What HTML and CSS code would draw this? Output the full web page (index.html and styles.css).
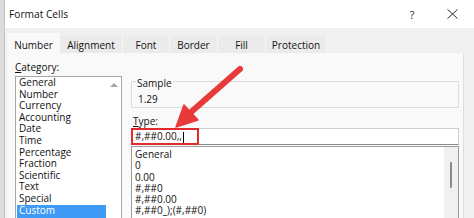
FILE: index.html
```html
<!DOCTYPE html>
<html>
<head>
<meta charset="utf-8">
<link rel="stylesheet" href="styles.css">
</head>
<body>
<div class="window">
  <div class="titlebar">
    <span class="title">Format Cells</span>
    <span class="help">?</span>
    <span class="close">
      <svg width="11" height="10" viewBox="0 0 11 10"><path d="M0.5 0.5 L10.5 9.5 M10.5 0.5 L0.5 9.5" stroke="#2a2a2a" stroke-width="1" fill="none"/></svg>
    </span>
  </div>
  <div class="content">
    <div class="tabs">
      <div class="tab active w-number">Number</div>
      <div class="tab w-align">Alignment</div>
      <div class="tab w-font">Font</div>
      <div class="tab w-border">Border</div>
      <div class="tab w-fill">Fill</div>
      <div class="tab w-prot">Protection</div>
    </div>
    <div class="panel">
      <div class="col-left">
        <div class="label"><u>C</u>ategory:</div>
        <div class="catlist">
          <div class="items">
            <div class="item">General</div>
            <div class="item">Number</div>
            <div class="item">Currency</div>
            <div class="item">Accounting</div>
            <div class="item">Date</div>
            <div class="item">Time</div>
            <div class="item">Percentage</div>
            <div class="item">Fraction</div>
            <div class="item">Scientific</div>
            <div class="item">Text</div>
            <div class="item">Special</div>
            <div class="item sel">Custom</div>
          </div>
          <div class="vscroll"><span class="up"></span></div>
        </div>
      </div>
      <div class="col-right">
        <div class="sample">
          <span class="legend">Sample</span>
          <div class="sample-val">1.29</div>
        </div>
        <div class="label type-label"><u>T</u>ype:</div>
        <div class="typebox">#,##0.00,,<span class="caret"></span><span class="redbox"></span></div>
        <div class="typelist">
          <div class="titems">
            <div class="titem">General</div>
            <div class="titem">0</div>
            <div class="titem">0.00</div>
            <div class="titem">#,##0</div>
            <div class="titem">#,##0.00</div>
            <div class="titem">#,##0_);(#,##0)</div>
          </div>
          <div class="tscroll"><span class="thumb"></span></div>
        </div>
      </div>
    </div>
  </div>
</div>
<svg class="arrow" width="474" height="218" viewBox="0 0 474 218">
  <line x1="240" y1="69" x2="190" y2="113" stroke="#e8393b" stroke-width="6" stroke-linecap="round"/>
  <polygon points="176,127 184,105 198,120" fill="#e8393b" stroke="#e8393b" stroke-width="1.5" stroke-linejoin="round"/>
</svg>
</body>
</html>
```

FILE: styles.css
```css
* { box-sizing: border-box; }
html, body { margin: 0; padding: 0; }
body {
  width: 474px;
  height: 218px;
  overflow: hidden;
  position: relative;
  background: #dcdcdc;
  font-family: "Open Sans", "Noto Sans", sans-serif;
  font-size: 10px;
  color: #111111;
}
.window {
  margin-left: 4px;
  height: 218px;
  overflow: hidden;
  border-left: 1px solid #c4c4c4;
  background: #f0f0f0;
}
.titlebar {
  height: 28px;
  background: #ffffff;
  display: flex;
  align-items: center;
  padding-left: 4px;
  padding-right: 2px;
}
.title { flex: 1; font-size: 10.2px; }
.help {
  width: 40px;
  text-align: center;
  font-size: 11px;
  color: #2a2a2a;
}
.close {
  width: 40px;
  display: flex;
  justify-content: center;
  align-items: center;
}
.content {
  padding: 5px 0 0 2px;
}
.tabs {
  display: flex;
  align-items: flex-end;
  height: 20px;
}
.tab {
  height: 17px;
  background: #ebebeb;
  border-right: 1px solid #f7f7f7;
  display: flex;
  align-items: center;
  justify-content: center;
  white-space: nowrap;
}
.tab.active {
  height: 20px;
  background: #f9f9f9;
  padding-top: 3px;
  border-right: none;
}
.w-number { width: 53px; }
.w-align { width: 63px; }
.w-font { width: 47px; }
.w-border { width: 48px; }
.w-fill { width: 48px; }
.w-prot { width: 61px; }
.panel {
  width: 457px;
  height: 165px;
  background: #f9f9f9;
  border-right: 1px solid #dedede;
  display: flex;
  gap: 9px;
  padding: 8px 0 0 8px;
}
.label { line-height: 12px; height: 12px; white-space: nowrap; }
.col-left { width: 107px; }
.catlist {
  margin-top: 3px;
  width: 107px;
  height: 142px;
  overflow: hidden;
  border: 1px solid #a8a8a8;
  border-bottom: none;
  background: #ffffff;
  display: flex;
  padding-left: 1px;
}
.items { width: 89px; }
.item {
  line-height: 11.6px;
  height: 11.6px;
  padding-left: 2px;
  white-space: nowrap;
}
.item.sel { background: #3f9bf6; color: #ffffff; height: 14px; }
.vscroll {
  width: 15px;
  display: flex;
  justify-content: center;
  padding-top: 6px;
}
.up {
  width: 0;
  height: 0;
  border-left: 4px solid transparent;
  border-right: 4px solid transparent;
  border-bottom: 4px solid #a6a6a6;
}
.col-right {
  width: 328px;
  padding-top: 20px;
}
.sample {
  position: relative;
  height: 27px;
  border: 1px solid #dcdcdc;
  padding: 11px 0 0 6px;
  line-height: 12px;
}
.legend {
  position: absolute;
  left: 4px;
  top: -5px;
  padding: 0 1px;
  background: #f9f9f9;
  line-height: 12px;
}
.type-label { margin-top: 7px; margin-left: 2px; }
.typebox {
  position: relative;
  margin-top: 1px;
  height: 17px;
  border: 1px solid #cfcfcf;
  border-bottom-color: #8a8a8a;
  background: #ffffff;
  padding-left: 3px;
  line-height: 15px;
  white-space: nowrap;
}
.caret {
  display: inline-block;
  width: 1px;
  height: 11px;
  background: #000;
  vertical-align: middle;
  margin-left: 1px;
}
.redbox {
  position: absolute;
  left: -1px;
  top: -1px;
  width: 68px;
  height: 17px;
  border: 2px solid #e12b2f;
}
.typelist {
  margin-top: 1px;
  width: 328px;
  height: 72px;
  overflow: hidden;
  border: 1px solid #9c9c9c;
  border-bottom: none;
  background: #ffffff;
  display: flex;
}
.titems { flex: 1; padding: 2px 0 0 3px; }
.titem { line-height: 11.3px; height: 11.3px; white-space: nowrap; }
.tscroll {
  width: 14px;
  background: #f0f0f0;
  position: relative;
}
.thumb {
  position: absolute;
  left: 6px;
  top: 15px;
  width: 2px;
  height: 26px;
  border-radius: 1px;
  background: #8a8a8a;
}
.arrow {
  position: absolute;
  left: 0;
  top: 0;
  pointer-events: none;
}
```
